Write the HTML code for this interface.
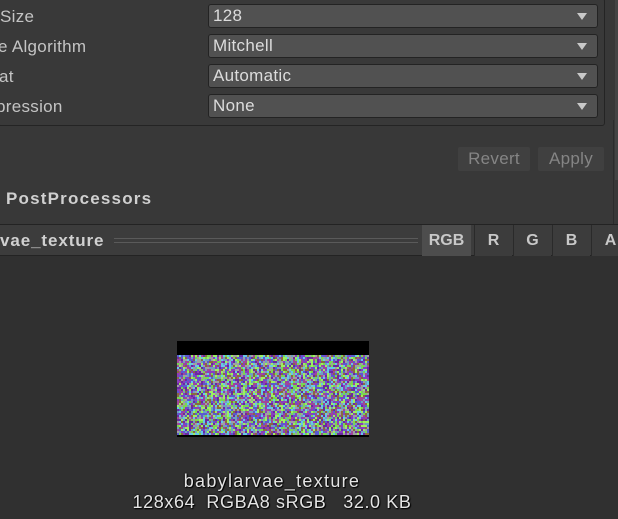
<!DOCTYPE html>
<html><head><style>
*{margin:0;padding:0;box-sizing:border-box}
body{width:618px;height:519px;overflow:hidden;background:#303030;font-family:"Liberation Sans",sans-serif;position:relative;color:#c4c4c4}
.top{position:absolute;left:0;top:0;width:618px;height:224px;background:#383838}
.panel{position:absolute;left:-2px;top:-2px;width:607px;height:128px;border:1px solid #242424;border-radius:3px;background:#393939}
.lbl{position:absolute;left:0;font-size:17px;color:#c4c4c4;letter-spacing:0.3px}
.dd{position:absolute;left:208px;width:390px;height:24px;background:#515151;border:1px solid #232323;border-radius:3px;font-size:17px;color:#dcdcdc;padding-left:4px;line-height:22px;letter-spacing:0.3px}
.dd:after{content:"";position:absolute;right:10px;top:8px;border-left:5px solid transparent;border-right:5px solid transparent;border-top:7px solid #c8c8c8}
.btn{position:absolute;top:147px;height:24px;background:#404040;border-radius:2px;font-size:17px;color:#858585;text-align:center;line-height:24px;letter-spacing:0.3px}
.tb{position:absolute;left:0;top:224px;width:618px;height:32px;background:#3c3c3c;border-top:1px solid #232323;border-bottom:1px solid #232323}
.tbb{position:absolute;top:0;height:31px;font-weight:bold;font-size:16px;color:#c8c8c8;text-align:center;line-height:31px;background:#3c3c3c;border-left:1px solid #2a2a2a}
.cap{position:absolute;width:618px;left:-37px;text-align:center;font-size:18px;color:#e4e4e4;text-shadow:1px 1px 1px #000,0 0 2px #000}
</style></head><body>
<div class="top"></div>
<div class="panel"></div>
<div class="lbl" style="top:7px">Size</div>
<div class="lbl" style="top:37px;left:-2px">e Algorithm</div>
<div class="lbl" style="top:67px;left:-1px">at</div>
<div class="lbl" style="top:97px;left:-4px">pression</div>
<div class="dd" style="top:4px">128</div>
<div class="dd" style="top:34px">Mitchell</div>
<div class="dd" style="top:64px">Automatic</div>
<div class="dd" style="top:94px">None</div>
<div class="btn" style="left:458px;width:72px">Revert</div>
<div class="btn" style="left:538px;width:66px">Apply</div>
<div style="position:absolute;left:613px;top:120px;width:1px;height:104px;background:#2c2c2c"></div>
<div style="position:absolute;left:615px;top:0;width:3px;height:180px;background:#444"></div>
<div style="position:absolute;left:6px;top:189px;font-size:17px;font-weight:bold;color:#d0d0d0;letter-spacing:1.2px">PostProcessors</div>
<div class="tb">
<div style="position:absolute;left:0;top:0;line-height:31px;font-size:17px;font-weight:bold;color:#d0d0d0;letter-spacing:0.9px">vae_texture</div>
<div style="position:absolute;left:114px;top:13px;width:304px;height:5px;border-top:1px solid #5a5a5a;border-bottom:1px solid #5a5a5a"></div>
<div class="tbb" style="left:422px;width:49px;background:#4d4d4d;border:none">RGB</div>
<div class="tbb" style="left:474px;width:38px">R</div>
<div class="tbb" style="left:513px;width:38px">G</div>
<div class="tbb" style="left:552px;width:38px">B</div>
<div class="tbb" style="left:591px;width:38px">A</div>
</div>
<div style="position:absolute;left:177px;top:341px;width:192px;height:14px;background:#000"></div>
<canvas id="c" width="96" height="41" style="position:absolute;left:177px;top:355px;width:192px;height:82px;background:#8a7aa8;image-rendering:pixelated"></canvas>
<div style="position:absolute;left:177px;top:435px;width:192px;height:2px;background:#000"></div>
<div class="cap" style="top:471px;letter-spacing:1.3px">babylarvae_texture</div>
<div class="cap" style="top:492px;white-space:pre;letter-spacing:0.6px">128x64  RGBA8 sRGB   32.0 KB</div>
<script>
var c=document.getElementById('c').getContext('2d');
var cols=['#8a3cc0','#6a2aa0','#7ad850','#66c8e8','#a0a0a0','#8a6a40','#5a5ad0','#a04898','#9cf060','#70a0c0'];
var s=12345;function r(){s=(s*1103515245+12345)&0x7fffffff;return s/0x7fffffff;}
for(var y=0;y<41;y++)for(var x=0;x<96;x++){c.fillStyle=cols[Math.floor(r()*cols.length)];c.fillRect(x,y,1,1);}
</script>
</body></html>
